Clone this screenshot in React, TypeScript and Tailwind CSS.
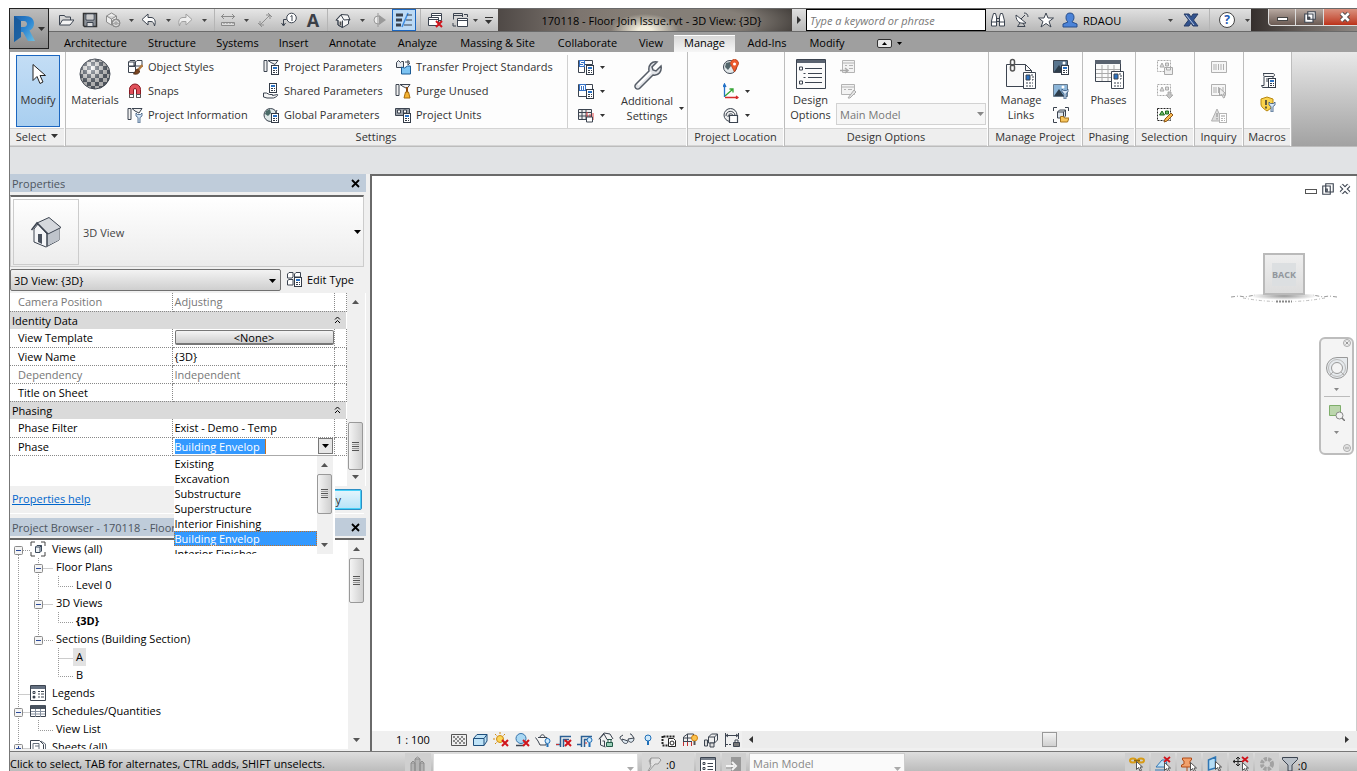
import type { ReactNode } from "react";

type IconProps = { children: ReactNode; size?: number; box?: string; className?: string };

function Icon({ children, size = 16, box = "0 0 16 16", className = "" }: IconProps) {
  return (
    <svg
      width={size}
      height={size}
      viewBox={box}
      fill="none"
      stroke="#3c4450"
      className={`shrink-0 ${className}`}
      aria-hidden="true"
    >
      {children}
    </svg>
  );
}

function Caret({ className = "text-[#444]" }: { className?: string }) {
  return (
    <svg width="5" height="3" viewBox="0 0 5 3" className={`shrink-0 ${className}`} aria-hidden="true">
      <path d="M0 0h5L2.5 3z" fill="currentColor" />
    </svg>
  );
}

function BigCaret({ up = false, className = "text-[#333]" }: { up?: boolean; className?: string }) {
  return (
    <svg width="7" height="4" viewBox="0 0 7 4" className={`shrink-0 ${className}`} aria-hidden="true">
      <path d={up ? "M0 4h7L3.5 0z" : "M0 0h7L3.5 4z"} fill="currentColor" />
    </svg>
  );
}

/* small "sheet with values" badge shared by many ribbon icons */
function Sheet({ x = 8, y = 6, grey = false }: { x?: number; y?: number; grey?: boolean }) {
  const line = grey ? "#b5b5b5" : "#333b47";
  return (
    <g transform={`translate(${x} ${y})`}>
      <rect x=".5" y=".5" width="7" height="9" fill="#fff" stroke={line} />
      <path d="M2 2h4v2H2z" fill={grey ? "#ccc" : "#2a72c4"} stroke="none" />
      <path d="M2 5.500h4M2 7.500h4" stroke={line} strokeDasharray="2 1" />
    </g>
  );
}

function RedX({ x = 9, y = 9 }: { x?: number; y?: number }) {
  return <path d={`M${x} ${y}l6 6m0-6l-6 6`} stroke="#d0141c" strokeWidth="2" />;
}

function Pointer({ x = 8, y = 5 }: { x?: number; y?: number }) {
  return (
    <path
      transform={`translate(${x} ${y})`}
      d="M.5.5v8l2-2 1.500 3.500 1.500-.7L4 6h2.500z"
      fill="#fff"
      stroke="#444"
      strokeWidth=".9"
    />
  );
}

function MiniWrench() {
  return <path d="M9 6v3l2 1.500V16h2v-5.500L15 9V6l-1.500 1.500h-3z" fill="#d8e8f8" stroke="#35557c" strokeWidth=".8" />;
}

const icons = {
  open: <><path d="M1.500 13V3.500h5l1 1.500h5v3" /><path d="M1.500 13l3-5H16l-4 5z" fill="#f4f4f4" /></>,
  save: <><path d="M1.500 1.500h13v13h-12l-1-1z" fill="#8a8f96" stroke="#333" strokeWidth="1.500" /><path d="M4 2h8v6H4z" fill="#fff" /><path d="M5 4h6M5 6h6" stroke="#999" /><path d="M5 10.500h6v4H5z" fill="#ddd" /></>,
  sync: <><path d="M1.500 4l5-3 5 3v6l-5 3-5-3zM1.500 4l5 3 5-3M6.500 7v6" stroke="#8b8b8b" fill="#ededed" /><circle cx="11" cy="11" r="4" fill="#aaa" stroke="#888" /><path d="M8.500 11c1-3 4-3 5 0M8.500 12c1 2 4 2 5 0" stroke="#eee" /></>,
  undo: <path d="M1 7.500L7 2v3.500h3c3 0 5.500 3 3.500 8.500C13 11 12 9.500 10 9.500H7V13z" fill="#fafafa" />,
  redo: <path d="M15 7.500L9 2v3.500H6C3 5.500.5 8.500 2.500 14 3 11 4 9.500 6 9.500h3V13z" fill="#eee" stroke="#a0a0a0" />,
  measure: <><path d="M1 4.500h14M4 2L1.500 4.500 4 7M12 2l2.500 2.500L12 7" stroke="#8a8a8a" /><path d="M1.500 10.500h13v3h-13z" fill="#ddd" stroke="#8a8a8a" /><path d="M4 10v2m3-2v2m3-2v2m3-2v2" stroke="#8a8a8a" /></>,
  dim: <path d="M3 13L13 3M3 9v4h4M9 3h4v4M1 11l4 4M11 1l4 4" stroke="#8f8f8f" />,
  tag: <><circle cx="10.500" cy="6" r="4.800" fill="#fff" /><path d="M9.500 4.500L11 3.500V9M5.500 7.500H2.500V13M.5 11L2.500 14l2-3" /></>,
  house: <><path d="M1 8l5-5.500L13 3l2 5-1.500.5V12l-6 3.500L3 13V8.500z" fill="#f6f6f6" /><path d="M1 8.500L6 3l3 5 6-.500M3 8v5l4.500 2.500V8.500" /><path d="M4.500 9.500h2V14l-2-1z" fill="#555" stroke="none" /></>,
  section: <><circle cx="7" cy="8" r="4" fill="#eee" stroke="#999" /><path d="M7 1v14" stroke="#999" /><path d="M8 3l7 5-7 5z" fill="#9a9a9a" stroke="none" /></>,
  thin: <><path d="M0 3h7M0 8h6M0 13h5" stroke="#38404c" strokeWidth="3" /><path d="M6 15L12 1" stroke="#3c8be0" strokeWidth="1.500" /><path d="M11 3h5M10 8h6M8 13h8" stroke="#38404c" /></>,
  closeHidden: <><path d="M4.500 1.500h10v7h-10zM4.500 3.500h10" fill="#fff" /><path d="M1.500 5.500h10v8h-10zM1.500 7.500h10" fill="#fff" /><RedX /></>,
  switchWin: <><path d="M5.500 6.500h10v8h-10zM5.500 8.500h10" fill="#fff" /><path d="M1.500 7.500v-6h9V5M1.500 3.500h9M12 2.500h3.500V5M1 11v3h3" /></>,
  binoculars: <><path d="M2.500 5l1-3.500h2l1 3.500v9h-5V9zM13.500 5l-1-3.500h-2L9.500 5v9h5V9z" fill="#fff" /><path d="M6.500 6.500h3v3h-3zM1.500 10h5M9.500 10h5" /></>,
  dish: <><path d="M2 3c0 7 4 9 10 8z" fill="#fff" /><path d="M7 7l4-4M10 1c2.500 0 4 1.500 4 4M6 11l-2.500 3.500H11L9 11" /></>,
  star: <path d="M8 1l2 5h5.500l-4.500 3.500L13 15l-5-3.500L3 15l2-5.500L.5 6H6z" fill="#fff" />,
  user: <path d="M8 1c3 0 4 2 4 4.500S10.500 9 10 10l5 2v3H1v-3l5-2C5 9 4 8 4 5.500S5 1 8 1z" fill="#4b83d8" stroke="#284f8c" />,
  exchange: <><path d="M1 2h5l2 3 2-3h5l-4.500 6 4.500 6h-5l-2-3-2 3H1l4.500-6z" fill="#32538f" stroke="#283d66" /><path d="M3 3l8 10" stroke="#b8c8e4" /></>,
  objectStyles: <><path d="M1.500 3L3 1.500h5V6l-1 1H1.500zM8.500 3L10 1.500h5V7H8.500zM1.500 7.500h7v6h-7z" fill="#fff" /><path d="M1.500 3H7v4" /><path d="M15.500 6L11 11" stroke="#b07840" strokeWidth="2.500" /><path d="M10.500 10c-2 0-2 3-4 5 3 .5 6 0 6-3z" fill="#7a4521" stroke="#55321b" /></>,
  magnet: <><path d="M2.500 14.500V6.500a5.500 5.500 0 0111 0v8h-4V7a1.500 1.500 0 00-3 0v7.500z" fill="#e0505a" stroke="#8a1820" /><path d="M2.500 11.500h4v3h-4zM9.500 11.500h4v3h-4z" fill="#fff" stroke="#555" /></>,
  projInfo: <><path d="M1 1.500h3v11H1zM5 1.500h10l-3 4.500-4-2z" fill="#f0f0f0" /><MiniWrench /></>,
  projParams: <><path d="M1 1.500h3v11H1zM5 1.500h10l-3 4-4-2z" fill="#f0f0f0" /><Sheet /></>,
  shared: <><Sheet x={6} y={0} /><path d="M.5 10h3l3 1.500h3v1l5-1c1 1-2 3-4 3.500H4l-3.500-1z" fill="#f5f5f5" /></>,
  global: <><circle cx="7.500" cy="8" r="6.500" fill="#dfe8e8" /><path d="M3 4l4-2 1 4-3 3-3-2z" fill="#4a6b68" stroke="none" /><path d="M8 11l3-2 3-6" /><Sheet /></>,
  transfer: <><path d="M1.500 8.500v-5l2-2 2 2 1-1h2v6z" fill="#e5e9ee" /><path d="M10 3h5M13 1v5l2-2" /><path d="M6.500 15V8l3 1 3-2h3v8z" fill="#7cc3f2" stroke="#1d5b94" /></>,
  purge: <><path d="M1 1.500h3v11H1zM5 1.500h10l-3 4-4-2z" fill="#f0f0f0" /><path d="M12 4v5" stroke="#8a4b13" strokeWidth="2" /><path d="M9 15l1.500-6h3L15 15z" fill="#f5b332" stroke="#a66a0c" /></>,
  units: <><path d="M.5 1.500h14v7H.5z" fill="#9aa0a8" /><path d="M2.500 3h3v3h-3zM8.500 3h3v3h-3z" fill="#fff" /><Sheet /></>,
  struct: <><path d="M.5 1.500h14v4H.5zM.5 5.500h6v8h-6z" fill="#fff" /><path d="M1 1h6v7H1z" fill="#3672c5" stroke="none" /><path d="M6 2.500H2.500v2h3v2H2" stroke="#fff" /><Sheet /></>,
  mep: <><path d="M.5 1.500h14v12H.5z" fill="#fff" /><path d="M1 1h7v7H1z" fill="#3672c5" stroke="none" /><path d="M2.500 7V2.500h4V7M4.500 2v5" stroke="#fff" /><Sheet /></>,
  panelSched: <><path d="M.5 2.500h13v10H.5zM.5 5.500h13M.5 9h13M4 2v11M8 2v11" fill="#eee" /><path d="M9 13V5m3 8V7m3 6V6" stroke="#e04040" /><path d="M8.500 10h6v5h-6z" fill="#fff" /></>,
  location: <><circle cx="7" cy="8" r="6.500" fill="#e3e8ea" /><path d="M3 4l4-1 1 4-3 4-3-3z" fill="#53666b" stroke="none" /><path d="M11.500 13L8.500 7a4 4 0 116 0z" fill="#ee5b2c" stroke="#a9320b" strokeWidth=".7" /><circle cx="11.500" cy="5" r="1.500" fill="#fff" stroke="none" /></>,
  coords: <><path d="M1.500 14V1M0 4l1.500-3L3 4" stroke="#2472c8" strokeWidth="1.300" /><path d="M2 14.500h13M13 13l2 1.500-2 1.500" stroke="#d52b2b" strokeWidth="1.300" /><path d="M2 13l8-7M6.500 6H10v3.500" stroke="#35a535" strokeWidth="1.300" /></>,
  position: <><circle cx="7.500" cy="8" r="6.500" fill="#eee" /><path d="M3 9c0-6 8-6 9-1M5 10c0-4 5-4 5-1" /><path d="M6.500 8.500h8v7h-8z" fill="#fff" strokeWidth="1.200" /></>,
  addOption: <><path d="M2.500 1.500h12v12h-12zM2.500 4h12M5 6.500h2M9 6.500h4M9 9.500h4" stroke="#b4b4b4" fill="#f3f3f3" /><path d="M0 11.500h7M5 9l3 2.500L5 14" stroke="#aaa" strokeWidth="1.500" /></>,
  pickOption: <><path d="M1.500 1.500h13v10h-13zM1.500 4h13M4 6.500h2M8 6.500h4" stroke="#b4b4b4" fill="#f3f3f3" /><path d="M8 15l6-8 2 2-6 6z" fill="#e4e4e4" stroke="#aaa" /></>,
  decal: <><path d="M.5 1.500h14v12H.5z" fill="#59758e" /><path d="M1 13l5-7 5 7z" fill="#2d3d4b" stroke="none" /><circle cx="11" cy="4" r="1.500" fill="#fff" stroke="none" /><Sheet /></>,
  image: <><path d="M.5 1.500h14v12H.5z" fill="#8cb5d8" stroke="#66788a" /><path d="M1 13l5-7 5 7z" fill="#2d3d4b" stroke="none" /><circle cx="10" cy="4" r="1.500" fill="#fff" stroke="none" /><MiniWrench /></>,
  startView: <><path d="M.5 4V.5H4M12 .5h3.500V4M.5 12v3.500H4" /><path d="M4.500 5l2-2h6v6l-2 2h-6zM4.500 5h6v6M10.500 5l2-2" fill="#dfe6ec" /><path d="M7.500 15V9.500h3l1 1.500H16l-1.500 4z" fill="#f7c55d" stroke="#a4701a" /></>,
  selSave: <><path d="M.5 1.500h13v11H.5z" stroke="#a8a8a8" strokeDasharray="2 1" /><path d="M3 8l2-4 2 4zM8.500 4h3v3h-3z" stroke="#aaa" fill="#ddd" /><path d="M7.500 8.500h8v7h-8z" fill="#eee" stroke="#aaa" /><path d="M9.500 9v2h4V9" stroke="#aaa" /></>,
  selLoad: <><path d="M.5 1.500h13v11H.5z" stroke="#a8a8a8" strokeDasharray="2 1" /><path d="M3 8l2-4 2 4zM8.500 4h3v3h-3z" stroke="#aaa" fill="#ddd" /><path d="M11 9h3v3h2l-3.500 3.500L9 12h2z" fill="#c4c4c4" stroke="#aaa" /></>,
  selEdit: <><path d="M.5 1.500h13v12H.5z" stroke="#222" strokeDasharray="2 1" /><path d="M2.500 8l2.500-4 2.500 4zM8.500 4h3v3h-3z" stroke="#1c6a1c" fill="#69b869" /><path d="M7 15l1-3 6-6 2 2-6 6z" fill="#f7b850" stroke="#8a5518" /></>,
  ids: <path d="M.5 2.500h15v11H.5zM3 5v6m2-6v6m2.500-6v6M10 5v6m2.500-6v6" stroke="#b0b0b0" fill="#f6f6f6" />,
  selId: <><path d="M.5 1.500h14v11H.5zM3 4v6m2-6v6m2.500-6v6M12 4v6" stroke="#b0b0b0" fill="#f6f6f6" /><path d="M8.500 5v8l2-2 2 4 1.500-1-2-3h3z" fill="#eee" stroke="#a8a8a8" /></>,
  warn: <><path d="M6 2l5.500 12H.5z" fill="#ddd" stroke="#b0b0b0" /><path d="M6 6v4M6 11v1.500" stroke="#888" /><Sheet grey /></>,
  macroMgr: <><path d="M3 1.500h10c2 0 2 3 0 3H5c-2 0-2-3 0-3M4 4.500v9H1.500l1 2H8M13 4v3M6 7h4M6 9h2" fill="#f6f6f6" /><Sheet /></>,
  macroSec: <><path d="M7 1l6 2v5c0 3-3 5-6 7-3-2-6-4-6-7V3z" fill="#f9d24d" stroke="#b8860b" /><path d="M6 4v5M6 10.500v2" stroke="#333" strokeWidth="1.500" /><MiniWrench /></>,
  types: <><path d="M1.500 3L3 1.500h4V6L6 7H1.500zM8.500 3L10 1.500h4.500V6h-6zM1.500 9.500L3 8.500h4V14H1.500z" fill="#fff" /><Sheet /></>,
  views: <><path d="M1 5V1h4M11 1h4v4M1 11v4h4M15 11v4h-4" stroke="#444" /><path d="M5.500 6L7 4.500h4.500V10L10 11.500H5.500zM5.500 6H10v5M10 6l1.500-1.500" stroke="#3b4a5c" fill="#eef2f6" /></>,
  legend: <><path d="M.5.5h15v15H.5z" fill="#fff" /><path d="M1 1h14v3H1z" fill="#647080" stroke="none" /><path d="M3 6.500h2v2H3zM8 6.500h2M11 6.500h3M8 9h2m1 0h3M8 12h2m1 0h3" /><circle cx="4" cy="12" r="1.500" fill="#3c4450" stroke="none" /></>,
  schedule: <><path d="M.5 2.500h15v11H.5z" fill="#fff" /><path d="M1 2h14v4H1z" fill="#48525f" stroke="none" /><path d="M1 8.500h14M1 11h14M5.500 6v8M10.500 6v8" stroke="#8791a0" /></>,
  sheets: <><path d="M.5 1.500h9l4 4v10H.5z" fill="#fff" /><path d="M3 4.500h6v9H3zM5 7h4M11 2l4.500 3v10" stroke="#66707c" /></>,
  detail: <><path d="M.5 2.500h15v11H.5z" fill="#eee" stroke="#555" /><path d="M2 4h2v2H2zm4 0h2v2H6zm4 0h2v2h-2zM4 6h2v2H4zm4 0h2v2H8zm4 0h2v2h-2zM2 8h2v2H2zm4 0h2v2H6zm4 0h2v2h-2zM4 10h2v2H4zm4 0h2v2H8zm4 0h2v2h-2z" fill="#888" stroke="none" /></>,
  cube: <><path d="M1.500 6.500L5 2.500h10V9l-3 4.500H1.500z" fill="#bfe3f7" stroke="#1f4f7c" /><path d="M1.500 6.500H12v7M12 6.500l3-4" stroke="#1f4f7c" /></>,
  sun: <><circle cx="7" cy="7" r="3.500" fill="#fbd75a" stroke="#d08a10" /><path d="M7 0v2M0 7h2M2 2l1.500 1.500M12 2l-1.500 1.500M2 12l1.500-1.500" stroke="#d08a10" /><RedX y={8} /></>,
  shadow: <><circle cx="7" cy="6.500" r="5" fill="#a9d8f4" stroke="#3774ac" /><path d="M2 13.500h7" strokeWidth="1.500" /><RedX y={8} /></>,
  teapot: <><path d="M3 5.500h9l-1 7.500H5L3 9 .5 5.500M5 5c1-3 4-3 5 0" fill="#f6f6f6" /><circle cx="12.500" cy="9" r="2.500" fill="#cfe9fb" stroke="#1f6fb8" /><path d="M12.500 12v3" stroke="#1f6fb8" strokeWidth="2" /></>,
  crop: <><path d="M0 12.500h4M4.500 15V4.500H15M7.500 15V7.500H13" stroke="#2b5f94" strokeWidth="1.500" /><path d="M0 12.500h3M8 9h3" stroke="#d03030" /><RedX y={8} /></>,
  cropShow: <><path d="M0 12.500h4M4.500 15V4.500H15M7.500 15V7.500H11" stroke="#2b5f94" strokeWidth="1.500" /><path d="M8 11h2" stroke="#d03030" /><circle cx="12.500" cy="8" r="2.500" fill="#cfe9fb" stroke="#1f6fb8" /><path d="M12.500 11v4" stroke="#1f6fb8" strokeWidth="2" /></>,
  lockView: <><path d="M1 7l5-6 6 1 3 5M2.500 7v6l5 2M4.500 9h2v5M1 7.500L6 2l3 5.500h5" fill="#f3f3f3" /><path d="M8.500 10.500h6v4h-6z" fill="#9bd0b8" stroke="#235a48" /><path d="M10 10V7.500h3V10" stroke="#235a48" /></>,
  glasses: <path d="M1 5l3-2M1 5c0 2 1 3 2 3M3 7c0 5 6 6 6 2zM9 7c1 5 6 4 6-1zM15 6l-3-4h-1" fill="#dfeaf2" />,
  bulb: <><circle cx="8" cy="6" r="3" fill="#cfe9fb" stroke="#1f6fb8" /><path d="M8 9v4" stroke="#1f6fb8" strokeWidth="2" /></>,
  tempProps: <><path d="M2.500 4.500h12M1.500 13.500h5M1.500 4v9" strokeWidth="2" strokeDasharray="2 1" stroke="#222" /><path d="M7.500 6.500h5l2 2v6h-7z" fill="#fff" stroke="#222" /><circle cx="11" cy="11" r="2" stroke="#222" /></>,
  analytical: <><path d="M1.500 14V5l4-3h6v5M2 6h9M5.500 2v12M2 9.500h8M9.500 9v5" /><path d="M1.500 14v-4M5.500 14v-4M9.500 14v-4" stroke="#c43030" /><circle cx="12.500" cy="6" r="3" fill="#fbc24d" stroke="#d08010" /><path d="M12.500 9v4" stroke="#555" strokeWidth="2" /></>,
  displace: <><path d="M5.500 5l3-3h6v6l-3 3h-6zM5.500 5h6v6M11.500 5l3-3" fill="#eee" /><path d="M1.500 8h3v6h-3zM7 11h4v4H7z" fill="#ddd" /></>,
  constraints: <><path d="M1.500 1v14M14.500 1v6M2 3.500h12M4 2L2 3.500 4 5M12 2l2 1.500L12 5" /><path d="M2 12.500h6" strokeDasharray="2 1" /><path d="M9.500 10.500h6v4h-6z" fill="#777" /><path d="M11 10V8h3v2" /></>,
  worksets: <><path d="M1 16V7h4v9M5 16V3h5v13M10 16V7h4v9" fill="#b4b4b4" stroke="#8d8d8d" /><path d="M1 7l2-2 2 2M5 3l2.500-2L10 3M10 7l2-2 2 2" stroke="#8d8d8d" /></>,
  request: <path d="M5 2h8l2 2-3 4H9l-6 7H2l3-5-1-2zM5 2L3 5l2 3" fill="#e2e2e2" stroke="#999" />,
  optList: <><path d="M.5 1.500h15v16H.5z" fill="#fff" /><path d="M1 2h14v2H1z" fill="#777f8a" stroke="none" /><path d="M3 6.500h2v2H3zM7.500 7.500H13M7.500 10.500H13M3 11.500h2v2H3zM7.500 13.500H13" /></>,
  optMove: <><path d="M5 1h10v15H5z" fill="#999" stroke="none" /><path d="M0 10h8M6 6l4 4-4 4" stroke="#f4f4f4" strokeWidth="2" /><path d="M0 12h5" stroke="#999" /></>,
  link: <><ellipse cx="4" cy="4.500" rx="3" ry="2" stroke="#d79b15" strokeWidth="2" /><ellipse cx="12" cy="4.500" rx="3" ry="2" stroke="#d79b15" strokeWidth="2" /><path d="M5 4.500h6" stroke="#8f6608" strokeWidth="1.500" /><Pointer x={7} y={5} /></>,
  underlay: <><path d="M1 11l6-7h4l1 7zM0 14h10" fill="#c2e2f6" stroke="#3478b4" /><path d="M9 1l6 5m0-5L9 6" stroke="#d0141c" strokeWidth="1.800" /><Pointer x={9} y={6} /></>,
  pinned: <><path d="M1.500 2h9v2L9 5v3l3 1v2H.5V9L3 8V5L1.500 4zM6 11v4" fill="#f1a06a" stroke="#b04a16" /><Pointer x={9} y={6} /></>,
  face: <><path d="M1.500 4l7-3v11l-7 2z" fill="#b5ddf5" stroke="#2f76b4" strokeWidth="1.500" /><Pointer x={8} y={5} /></>,
  drag: <><path d="M5 1v9M0 5.500h10M3 3l2-2 2 2M3 8l2 2 2-2M2 4L0 5.500 2 7" stroke="#222" /><path d="M9 1l6 5m0-5L9 6" stroke="#d0141c" strokeWidth="1.800" /><Pointer x={9} y={6} /></>,
  gear: <circle cx="8" cy="8" r="5" stroke="#a2a2a2" strokeWidth="4" strokeDasharray="3 1" />,
  filter: <path d="M.5 1.500h15v2L10 9v6H6V9L.5 3.500z" fill="#b9c0c8" />,
};

type IconName = keyof typeof icons;

function Glyph({ name, size }: { name: IconName; size?: number }) {
  return <Icon size={size}>{icons[name]}</Icon>;
}

function Slot({ w, name, label }: { w: string; name?: IconName; label: string }) {
  return (
    <button type="button" aria-label={label} className={`flex h-full shrink-0 items-center justify-center ${w}`}>
      {name ? <Glyph name={name} /> : <Caret />}
    </button>
  );
}

function Divider() {
  return <span className="h-full w-px shrink-0 bg-[#b5b5b5]" />;
}

function QuickAccess() {
  return (
    <div className="flex h-full w-[450px] shrink-0 items-center bg-linear-to-b from-[#e6e6e6] to-[#bdbdbd] pl-[6px]">
      <Slot w="w-[24px]" name="open" label="Open" />
      <Slot w="w-[24px]" name="save" label="Save" />
      <Slot w="w-[22px]" name="sync" label="Synchronize" />
      <Slot w="w-[14px]" label="Synchronize options" />
      <Slot w="w-[22px]" name="undo" label="Undo" />
      <Slot w="w-[16px]" label="Undo list" />
      <Slot w="w-[18px]" name="redo" label="Redo" />
      <Slot w="w-[20px]" label="Redo list" />
      <Divider />
      <Slot w="w-[26px]" name="measure" label="Measure" />
      <Slot w="w-[10px]" label="Measure options" />
      <Slot w="w-[28px]" name="dim" label="Aligned dimension" />
      <Slot w="w-[20px]" name="tag" label="Tag by category" />
      <button type="button" className="w-[28px] text-center text-lg font-bold text-[#3a3f47]">A</button>
      <Divider />
      <Slot w="w-[30px]" name="house" label="Default 3D view" />
      <Slot w="w-[8px]" label="3D view options" />
      <Slot w="w-[26px]" name="section" label="Section" />
      <button
        type="button"
        aria-label="Thin lines"
        className="flex h-[22px] w-[24px] items-center justify-center border border-[#1b66c0] bg-[#bcdaf5]"
      >
        <Glyph name="thin" />
      </button>
      <span className="w-[4px]" />
      <Divider />
      <Slot w="w-[28px]" name="closeHidden" label="Close hidden windows" />
      <Slot w="w-[22px]" name="switchWin" label="Switch windows" />
      <Slot w="w-[8px]" label="Window list" />
      <button type="button" aria-label="Customize" className="flex flex-1 flex-col items-center gap-[2px] text-[#333]">
        <span className="h-px w-[8px] bg-[#333]" />
        <BigCaret />
      </button>
    </div>
  );
}

function TitleBar() {
  return (
    <header className="flex h-[24px] border-y border-[#6a6a6a] bg-linear-to-b from-[#e0e0e0] to-[#b8b8b8]">
      <div className="w-[38px] shrink-0" />
      <QuickAccess />
      <div className="flex min-w-0 flex-1 items-center justify-center bg-[radial-gradient(ellipse_34px_16px_at_50%_95%,#f2eddc_20%,transparent),radial-gradient(ellipse_120px_34px_at_70%_55%,#857f78_35%,transparent),linear-gradient(90deg,#4f4946,#7d756f_28%,#8b8379_55%,#2a2624_90%)] whitespace-nowrap">
        <h1 className="pl-[13px] text-[11px] text-black">170118 - Floor Join Issue.rvt - 3D View: {"{3D}"}</h1>
      </div>
      <div className="flex w-[459px] shrink-0 items-center">
        <span className="flex w-[14px] justify-center">
          <svg width="4" height="8" viewBox="0 0 4 8" aria-hidden="true"><path d="M0 0l4 4-4 4z" fill="#333" /></svg>
        </span>
        <input
          aria-label="Search"
          placeholder="Type a keyword or phrase"
          className="h-[22px] w-[180px] border border-black bg-white px-[3px] text-[11px] italic outline-none placeholder:text-[#777]"
        />
        <Slot w="w-[24px]" name="binoculars" label="Find" />
        <Slot w="w-[24px]" name="dish" label="Communication center" />
        <Slot w="w-[23px]" name="star" label="Favorites" />
        <button type="button" className="flex h-full w-[103px] items-center gap-[5px] pl-[5px] text-[11px]">
          <Glyph name="user" />
          RDAOU
        </button>
        <Slot w="w-[20px]" label="Account options" />
        <Slot w="w-[22px]" name="exchange" label="Exchange apps" />
        <span className="w-[7px]" />
        <Divider />
        <button type="button" aria-label="Help" className="flex w-[34px] justify-center">
          <span className="flex size-4 items-center justify-center rounded-full border border-[#444] bg-white text-xs font-bold text-[#2359b4]">?</span>
        </button>
        <Slot w="w-[7px]" label="Help options" />
      </div>
      <div className="flex w-[106px] shrink-0 items-start justify-end bg-linear-to-r from-[#352f2d] via-[#665f5b] to-[#8d8782]">
        <button type="button" aria-label="Minimize" className="flex h-[17px] w-[28px] items-center justify-center rounded-bl border border-t-0 border-[#ddd] bg-linear-to-b from-[#b9aaa2] to-[#6a5a53]">
          <span className="mt-[4px] h-[4px] w-[11px] border border-[#444] bg-white" />
        </button>
        <button type="button" aria-label="Restore" className="flex h-[17px] w-[28px] items-center justify-center border-r border-b border-[#ddd] bg-linear-to-b from-[#b9aaa2] to-[#6a5a53]">
          <Icon size={12}><path d="M5 1h10v10H5zM1 4h11v11H1z" fill="#fff" strokeWidth="1.500" /><path d="M5 8h3v3H5z" fill="#555" /></Icon>
        </button>
        <button type="button" aria-label="Close" className="flex h-[17px] w-[33px] items-center justify-center border-b border-[#ddd] bg-linear-to-b from-[#d9917f] to-[#bb3017] pl-[9px]">
          <Icon size={12}><path d="M3 3l10 10M13 3L3 13" stroke="#444" strokeWidth="6" /><path d="M3 3l10 10M13 3L3 13" stroke="#fff" strokeWidth="3.500" /></Icon>
        </button>
      </div>
    </header>
  );
}

const tabs = [
  { label: "Architecture", w: "w-[85px]" },
  { label: "Structure", w: "w-[68px]" },
  { label: "Systems", w: "w-[63px]" },
  { label: "Insert", w: "w-[49px]" },
  { label: "Annotate", w: "w-[69px]" },
  { label: "Analyze", w: "w-[61px]" },
  { label: "Massing & Site", w: "w-[99px]" },
  { label: "Collaborate", w: "w-[81px]" },
  { label: "View", w: "w-[46px]" },
  { label: "Manage", w: "w-[61px]" },
  { label: "Add-Ins", w: "w-[64px]" },
  { label: "Modify", w: "w-[56px]" },
];

function TabRow() {
  return (
    <nav className="flex h-[20px] items-end bg-[#9f9f9f] pl-[43px]">
      {tabs.map((tab) => (
        <button
          key={tab.label}
          type="button"
          className={`h-[17px] shrink-0 border-t pb-[2px] leading-[14px] whitespace-nowrap text-center ${tab.w} ${
            tab.label === "Manage" ? "border-white bg-linear-to-b from-[#d8d8d8] to-[#f6f6f6]" : "border-transparent"
          }`}
        >
          {tab.label}
        </button>
      ))}
      <button type="button" aria-label="Minimize ribbon" className="ml-[22px] flex h-[18px] items-center gap-[5px]">
        <span className="flex h-[9px] w-[15px] items-center justify-center rounded-xs border border-[#333] bg-[#e8e8e8]"><Caret className="rotate-180" /></span>
        <Caret className="text-black" />
      </button>
    </nav>
  );
}

function Panel({ title, w, children }: { title: ReactNode; w: string; children: ReactNode }) {
  return (
    <section className={`flex shrink-0 flex-col border-r border-[#bdbdbd] bg-[#fdfdfd] ${w}`}>
      <div className="flex h-[76px] pt-[3px]">{children}</div>
      <h2 className="mr-px flex h-[18px] items-center justify-center border-y border-[#d4d4d4] bg-[#eeeeee] pb-[2px] whitespace-nowrap">
        {title}
      </h2>
    </section>
  );
}

function Small({ name, label, text, caret = false }: { name: IconName; label: string; text?: boolean; caret?: boolean }) {
  return (
    <button type="button" aria-label={label} className="flex h-6 items-center gap-[5px] whitespace-nowrap">
      <Glyph name={name} />
      {text && <span className="pb-[2px]">{label}</span>}
      {caret && <Caret className="ml-px text-[#333]" />}
    </button>
  );
}

function Large({ label, w, children, active = false }: { label: ReactNode; w: string; children: ReactNode; active?: boolean }) {
  return (
    <button
      type="button"
      className={`flex h-[72px] shrink-0 flex-col items-center border leading-[15px] ${w} ${
        active ? "border-[#1b66c0] bg-linear-to-b from-[#c3ddf5] to-[#a9cff0]" : "border-transparent"
      }`}
    >
      <span className="flex h-[36px] items-center justify-center">{children}</span>
      <span>{label}</span>
    </button>
  );
}

function Ribbon() {
  return (
    <div className="flex h-[95px] border-b border-[#bcbcbc] bg-linear-to-b from-[#e9e9e9] to-[#a2a2a2] text-[#333]">
      <Panel w="w-[56px]" title={<span className="flex items-center gap-[5px]">Select <BigCaret /></span>}>
        <div className="pl-[6px]">
          <Large label="Modify" w="w-[44px]" active>
            <Icon size={22} box="0 0 22 22"><path d="M6 1.500v16l4-4 3 7 3-1.500-3-6.500h5.500z" fill="#fff" stroke="#222" /></Icon>
          </Large>
        </div>
      </Panel>

      <Panel w="w-[622px]" title="Settings">
        <div className="w-[61px] pl-[2px]">
          <Large label="Materials" w="w-[54px]">
            <Icon size={32} box="0 0 32 32">
              <defs>
                <pattern id="checks" width="8" height="8" patternUnits="userSpaceOnUse">
                  <path d="M0 0h8v8H0z" fill="#fff" stroke="none" />
                  <path d="M0 0h4v4H0zM4 4h4v4H4z" fill="#606a78" stroke="none" />
                </pattern>
                <radialGradient id="ball" cx=".38" cy=".3">
                  <stop offset="0" stopColor="#fff" stopOpacity=".5" />
                  <stop offset="1" stopColor="#333" stopOpacity=".4" />
                </radialGradient>
              </defs>
              <circle cx="16" cy="16" r="15" fill="url(#checks)" stroke="#444c58" />
              <circle cx="16" cy="16" r="15" fill="url(#ball)" stroke="none" />
            </Icon>
          </Large>
        </div>
        <div className="w-[136px]">
          <Small name="objectStyles" label="Object Styles" text />
          <Small name="magnet" label="Snaps" text />
          <Small name="projInfo" label="Project Information" text />
        </div>
        <div className="w-[132px]">
          <Small name="projParams" label="Project Parameters" text />
          <Small name="shared" label="Shared Parameters" text />
          <Small name="global" label="Global Parameters" text />
        </div>
        <div className="w-[172px]">
          <Small name="transfer" label="Transfer Project Standards" text />
          <Small name="purge" label="Purge Unused" text />
          <Small name="units" label="Project Units" text />
        </div>
        <div className="border-l border-[#d0d0d0] pl-[10px]">
          <Small name="struct" label="Structural settings" caret />
          <Small name="mep" label="MEP settings" caret />
          <Small name="panelSched" label="Panel schedule templates" caret />
        </div>
        <div className="flex flex-1 items-center justify-end pr-[3px]">
          <Large label={<>Additional<br />Settings</>} w="w-[64px]">
            <Icon size={30} box="0 0 30 30"><path d="M25 2l-5 5 1 3 3 1 5-5c1 5-2 10-8 9L8 28c-3 3-7-1-4-4L17 11c-1-6 3-10 8-9z" fill="#e2e4e8" stroke="#555c66" strokeWidth="1.500" /><path d="M6 25L19 12" stroke="#fff" strokeWidth="2" /></Icon>
          </Large>
          <Caret className="mt-[34px] text-[#333]" />
        </div>
      </Panel>

      <Panel w="w-[97px]" title="Project Location">
        <div className="pl-[35px]">
          <Small name="location" label="Location" />
          <Small name="coords" label="Coordinates" caret />
          <Small name="position" label="Position" caret />
        </div>
      </Panel>

      <Panel w="w-[204px]" title="Design Options">
        <Large label={<>Design<br />Options</>} w="w-[51px]">
          <Icon size={32} box="0 0 32 32">
            <path d="M1.500 1.500h29v29h-29z" fill="#fbfbfb" />
            <path d="M2 2h28v3H2z" fill="#59626f" stroke="none" />
            <path d="M4.500 9h3v3h-3zM10 10.500h17M8.500 15.500h2M13 15.500h14M8.500 19.500h2M13 19.500h14M4.500 23h3v3h-3zM10 24.500h17" />
          </Icon>
        </Large>
        <div className="flex flex-1 flex-col items-start pr-[2px]">
          <div className="pl-[4px]">
            <Small name="addOption" label="Add to set" />
            <Small name="pickOption" label="Pick to edit" />
          </div>
          <div className="relative w-full">
            <select aria-label="Active design option" className="h-[22px] w-full appearance-none border border-[#d2d2d2] bg-[#f6f6f6] pl-[3px] text-[11px] text-[#777]">
              <option>Main Model</option>
            </select>
            <BigCaret className="absolute top-[9px] right-[2px] text-[#888]" />
          </div>
        </div>
      </Panel>

      <Panel w="w-[94px]" title="Manage Project">
        <Large label={<>Manage<br />Links</>} w="w-[64px]">
          <Icon size={32} box="0 0 32 32">
            <path d="M1.500 6.500h19l6 6v16h-25z" fill="#fafafa" />
            <path d="M20.500 6.500v6h6" />
            <rect x="5.500" y="1.500" width="4" height="6" rx="2" stroke="#555" strokeWidth="1.500" />
            <rect x="5.500" y="7" width="4" height="6" rx="2" stroke="#555" strokeWidth="1.500" />
            <path d="M18.500 14.500h12v16h-12z" fill="#fff" />
            <path d="M21 17h4v5h-4z" fill="#2a72c4" /><path d="M26 17h2v5h-2M21 25h7M21 28h7" strokeDasharray="2 1" />
          </Icon>
        </Large>
        <div>
          <Small name="decal" label="Decal types" />
          <Small name="image" label="Manage images" />
          <Small name="startView" label="Starting view" />
        </div>
      </Panel>

      <Panel w="w-[53px]" title="Phasing">
        <Large label="Phases" w="w-[51px]">
          <Icon size={32} box="0 0 32 32">
            <path d="M2.500 2.500h25v21h-25z" fill="#fafafa" />
            <path d="M2 2h26v4H2z" fill="#59626f" stroke="none" />
            <path d="M3 11.500h24M3 15.500h24M3 19.500h24M9 7v16M15 7v16M21 7v16" stroke="#aaa" />
            <path d="M18.500 13.500h12v17h-12z" fill="#fff" />
            <path d="M21 16h4v5h-4z" fill="#2a72c4" /><path d="M26 16h2v5h-2M21 25h7M21 28h7" strokeDasharray="2 1" />
          </Icon>
        </Large>
      </Panel>

      <Panel w="w-[59px]" title="Selection">
        <div className="pl-[21px]">
          <Small name="selSave" label="Save selection" />
          <Small name="selLoad" label="Load selection" />
          <Small name="selEdit" label="Edit selection" />
        </div>
      </Panel>

      <Panel w="w-[49px]" title="Inquiry">
        <div className="pl-[16px]">
          <Small name="ids" label="IDs of selection" />
          <Small name="selId" label="Select by ID" />
          <Small name="warn" label="Warnings" />
        </div>
      </Panel>

      <Panel w="w-[48px]" title="Macros">
        <div className="flex flex-col justify-center pl-[16px]">
          <Small name="macroMgr" label="Macro manager" />
          <Small name="macroSec" label="Macro security" />
        </div>
      </Panel>
    </div>
  );
}

function Scrollbar({ thumb, className = "" }: { thumb: string; className?: string }) {
  return (
    <div className={`flex shrink-0 flex-col items-center bg-[#f0f0f0] py-[7px] ${className}`}>
      <BigCaret up className="text-[#555]" />
      <div className={`flex w-[15px] flex-col items-center justify-center gap-px rounded-xs border border-[#999] bg-linear-to-r from-[#f4f4f4] to-[#cfcfcf] ${thumb}`}>
        <span className="h-px w-[7px] bg-[#555]" />
        <span className="h-px w-[7px] bg-[#999]" />
        <span className="h-px w-[7px] bg-[#555]" />
        <span className="h-px w-[7px] bg-[#999]" />
        <span className="h-px w-[7px] bg-[#555]" />
      </div>
      <BigCaret className="mt-auto text-[#555]" />
    </div>
  );
}

function PaneHeader({ title }: { title: string }) {
  return (
    <div className="flex h-[18px] items-center justify-between bg-[#bfccda] pr-[6px] pl-[2px] text-[#4d5560]">
      <h2 className="truncate">{title}</h2>
      <button type="button" aria-label={`Close ${title}`}>
        <svg width="9" height="9" viewBox="0 0 9 9" aria-hidden="true"><path d="M1 1l7 7M8 1L1 8" stroke="#000" strokeWidth="1.800" /></svg>
      </button>
    </div>
  );
}

const phases = ["Existing", "Excavation", "Substructure", "Superstructure", "Interior Finishing", "Building Envelop", "Interior Finishes"];

function PhaseList() {
  return (
    <div className="absolute top-[17px] -left-px z-10 flex h-[99px] w-[161px] overflow-hidden border-t border-[#aaa] bg-white">
      <ul role="listbox" aria-label="Phases" className="flex-1">
        {phases.map((phase) => (
          <li
            key={phase}
            role="option"
            aria-selected={phase === "Building Envelop"}
            className={`h-[15px] pl-px leading-[15px] ${
              phase === "Building Envelop" ? "bg-[#3399ff] text-white outline-1 -outline-offset-1 outline-dotted outline-[#c87020]" : ""
            }`}
          >
            {phase}
          </li>
        ))}
      </ul>
      <Scrollbar thumb="mt-[7px] h-[40px]" className="mr-[2px] w-[16px]" />
    </div>
  );
}

type Row = { name: string; value?: string; dim?: boolean; group?: boolean };

const rows: Row[] = [
  { name: "Camera Position", value: "Adjusting", dim: true },
  { name: "Identity Data", group: true },
  { name: "View Template", value: "<None>" },
  { name: "View Name", value: "{3D}" },
  { name: "Dependency", value: "Independent", dim: true },
  { name: "Title on Sheet" },
  { name: "Phasing", group: true },
  { name: "Phase Filter", value: "Exist - Demo - Temp" },
  { name: "Phase", value: "Building Envelop" },
];

function PropertyValue({ row }: { row: Row }) {
  if (row.name === "View Template") {
    return (
      <button type="button" className="block h-[15px] w-[159px] rounded-xs border border-[#777] border-b-2 bg-linear-to-b from-[#f4f4f4] to-[#cfcfcf] leading-[13px]">
        {row.value}
      </button>
    );
  }
  if (row.name === "Phase") {
    return (
      <div className="relative flex h-[17px] items-center justify-between">
        <select id="phase" aria-label="Phase" defaultValue={row.value} className="h-[15px] w-[91px] appearance-none border-r border-[#c87020] bg-[#3399ff] p-0 text-[11px] leading-[15px] text-white">
          {phases.map((phase) => <option key={phase}>{phase}</option>)}
        </select>
        <span className="mr-px flex h-[16px] w-[15px] items-center justify-center border border-[#777] bg-[#e6e6e6]"><BigCaret className="text-black" /></span>
        <PhaseList />
      </div>
    );
  }
  return <>{row.value}</>;
}

function PropertyTable() {
  return (
    <table className="w-[336px] table-fixed border-collapse self-start">
      <colgroup>
        <col className="w-[162px]" />
        <col className="w-[162px]" />
        <col className="w-[12px]" />
      </colgroup>
      <tbody>
        {rows.map((row) =>
          row.group ? (
            <tr key={row.name} className="h-[18px] bg-[#dadada]">
              <th colSpan={3} className="p-0 pr-[5px] pl-[2px] text-left font-normal">
                <span className="flex h-[17px] items-center justify-between">
                  {row.name}
                  <svg width="7" height="8" viewBox="0 0 7 8" fill="none" stroke="#000" aria-hidden="true"><path d="M1 3.500L3.500 1 6 3.500M1 7L3.500 4.500 6 7" /></svg>
                </span>
              </th>
            </tr>
          ) : (
            <tr key={row.name} className={`h-[18px] ${row.dim ? "text-[#777]" : ""}`}>
              <th className="border-r border-b border-dotted border-[#888] p-0 pl-[8px] text-left font-normal leading-[17px]">{row.name}</th>
              <td className="border-r border-b border-dotted border-[#888] p-0 pl-[2px] leading-[17px]"><PropertyValue row={row} /></td>
              <td className="border-r border-b border-dotted border-[#888] p-0" />
            </tr>
          )
        )}
      </tbody>
    </table>
  );
}

function Properties() {
  return (
    <section>
      <PaneHeader title="Properties" />
      <div className="mt-[3px] mr-[2px] flex h-[72px] items-center border border-[#ccc] border-t-2 border-t-[#666] bg-linear-to-b from-white to-[#ececec] pr-[2px] pl-[2px]">
        <div className="flex size-[66px] items-center justify-center border border-[#ccc]">
          <Icon size={32} box="0 0 32 32">
            <path d="M4 13l4-5 9 10 12-6v12l-13 7L4 26z" fill="#f4f5f7" />
            <path d="M17 18l12-6v12l-12 6z" fill="#bfc4cb" stroke="none" />
            <path d="M7 7l12-5.500L31 11.500 18 18z" fill="#d5d8dd" />
            <path d="M1.500 14L7 7l11 11M17 18v12" strokeWidth="1.500" /><path d="M8 18h4v10l-4-2z" fill="#4a525e" stroke="none" />
          </Icon>
        </div>
        <span className="pt-[2px] pl-[4px] text-[#444]">3D View</span>
        <BigCaret className="ml-auto" />
      </div>
      <div className="flex h-[26px] items-center">
        <div className="relative w-[271px]">
          <select aria-label="Element" className="block h-[22px] w-full appearance-none rounded-xs border border-[#707070] bg-linear-to-b from-[#f3f3f3] to-[#cfcfcf] pl-[3px] text-[11px]">
            <option>3D View: {"{3D}"}</option>
          </select>
          <BigCaret className="absolute top-[10px] right-[5px] text-black" />
        </div>
        <button type="button" className="ml-[5px] flex items-center gap-[5px] pb-[2px]"><Glyph name="types" /> Edit Type</button>
      </div>
      <div className="flex h-[193px] bg-white pr-[2px]">
        <PropertyTable />
        <Scrollbar thumb="mt-[118px] h-[48px]" className="w-[18px]" />
      </div>
      <div className="mr-[2px] flex h-[28px] items-center justify-between border-b border-white pr-[2px] pl-[2px]">
        <a href="#help" className="pb-[2px] text-[#0066cc] underline">Properties help</a>
        <button type="button" className="h-[21px] w-[72px] rounded-xs border border-[#2c8ec4] bg-linear-to-b from-[#e6f5fc] to-[#b6e3f8] pr-[20px] text-right text-[#333] shadow-[inset_0_0_0_1px_#48d0f8]">Apply</button>
      </div>
    </section>
  );
}

type Guide = "v" | "none" | "end" | "tee" | "minus" | "minusLast" | "minusFirst" | "plus";
type Node = { label: string; guides: Guide[]; icon?: IconName; bold?: boolean; selected?: boolean };

const tree: Node[] = [
  { label: "Views (all)", guides: ["minusFirst"], icon: "views" },
  { label: "Floor Plans", guides: ["v", "minus"] },
  { label: "Level 0", guides: ["v", "v", "end"] },
  { label: "3D Views", guides: ["v", "minus"] },
  { label: "{3D}", guides: ["v", "v", "end"], bold: true },
  { label: "Sections (Building Section)", guides: ["v", "minusLast"] },
  { label: "A", guides: ["v", "none", "tee"], selected: true },
  { label: "B", guides: ["v", "none", "end"] },
  { label: "Legends", guides: ["tee"], icon: "legend" },
  { label: "Schedules/Quantities", guides: ["minus"], icon: "schedule" },
  { label: "View List", guides: ["v", "end"] },
  { label: "Sheets (all)", guides: ["plus"], icon: "sheets" },
];

const guidePaths: Record<Guide, string> = {
  v: "M8.500 0v18",
  none: "",
  end: "M8.500 0v10.500H23",
  tee: "M8.500 0v18M8.500 10.500H23",
  minus: "M8.500 0v18M8.500 10.500H23",
  minusLast: "M8.500 0v10.500H23",
  minusFirst: "M8.500 18v-7.500H23",
  plus: "M8.500 0v18M8.500 10.500H23",
};

function TreeGuide({ kind, clip }: { kind: Guide; clip: boolean }) {
  const boxed = kind.startsWith("minus") || kind === "plus";
  return (
    <svg width="20" height="18" className={`shrink-0 ${clip ? "overflow-hidden" : "overflow-visible"}`} aria-hidden="true">
      <path d={guidePaths[kind]} fill="none" stroke="#999" strokeDasharray="1 1" />
      {boxed && <rect x="4.500" y="6.500" width="8" height="8" rx="1" fill="#f4f4f4" stroke="#8a8a8a" />}
      {boxed && <path d={kind === "plus" ? "M6 10.500h5M8.500 8v5" : "M6 10.500h5"} stroke="#2a4a9a" />}
    </svg>
  );
}

function ProjectBrowser() {
  return (
    <section className="flex min-h-0 flex-1 flex-col pt-[4px]">
      <PaneHeader title="Project Browser - 170118 - Floor Join Issue.rvt" />
      <div className="mt-[2px] mr-[2px] mb-[2px] flex min-h-0 flex-1 overflow-hidden border-t-2 border-[#666] bg-white">
        <ul className="flex-1">
          {tree.map((node) => (
            <li key={node.label} className="flex h-[18px] items-center leading-[18px]">
              {node.guides.map((kind, i) => <TreeGuide key={i} kind={kind} clip={Boolean(node.icon)} />)}
              {node.icon && <Glyph name={node.icon} />}
              <span className={`ml-[3px] px-[3px] ${node.bold ? "font-bold" : ""} ${node.selected ? "bg-[#e2e2e2]" : ""}`}>
                {node.label}
              </span>
            </li>
          ))}
        </ul>
        <Scrollbar thumb="mt-[7px] h-[45px]" className="w-[16px]" />
      </div>
    </section>
  );
}

function ViewCube() {
  return (
    <div className="absolute top-[77px] right-[17px] flex w-[110px] flex-col items-center">
      <button type="button" className="z-10 flex size-[42px] items-center justify-center border-2 border-[#bababa] bg-linear-to-b from-[#eeeeee] to-[#dddddd]">
        <span className="bg-[#dcdfe1] py-1 text-[9px] font-bold text-[#92979d]">BACK</span>
      </button>
      <svg width="110" height="10" viewBox="0 0 110 10" fill="none" className="-mt-px" aria-hidden="true">
        <defs>
          <radialGradient id="cubeShadow">
            <stop offset="0" stopColor="#999" />
            <stop offset="1" stopColor="#fff" />
          </radialGradient>
        </defs>
        <ellipse cx="55" cy="2" rx="34" ry="4" fill="url(#cubeShadow)" />
        <path d="M2 3l8-1 6 1 10-2M108 3l-8-1-6 1-10-2" stroke="#999" strokeDasharray="4 2 1 2" />
        <path d="M14 4q16 3 32 3.500M96 4q-16 3-32 3.500" stroke="#bbb" strokeDasharray="3 2 1 2" />
        <path d="M47 7.500h16" stroke="#888" strokeWidth="2" strokeDasharray="2 1" />
      </svg>
    </div>
  );
}

function NavigationBar() {
  return (
    <div className="absolute top-[161px] right-[2px] flex h-[118px] w-[35px] flex-col items-center rounded-md border-2 border-[#bdbdbd] bg-[#f4f4f4]">
      <button type="button" aria-label="Close navigation bar" className="mr-px self-end">
        <Icon size={8}><circle cx="8" cy="8" r="7" stroke="#aaa" strokeWidth="2" fill="#eee" /><path d="M5 5l6 6M11 5l-6 6" stroke="#999" strokeWidth="2" /></Icon>
      </button>
      <button type="button" aria-label="Steering wheel" className="mt-[9px]">
        <Icon size={24} box="0 0 24 24">
          <path d="M12 1.500h10.500V12A10.500 10.500 0 1112 1.500z" fill="#e6eaed" stroke="#999" />
          <circle cx="12" cy="12" r="8.500" stroke="#bbb" /><circle cx="12" cy="12" r="5.500" fill="#f4f4f4" stroke="#999" />
          <path d="M8 16l-3 3M16 16l3 3" stroke="#aaa" />
        </Icon>
      </button>
      <Caret className="mt-[8px] text-[#888]" />
      <span className="mt-[5px] h-px w-[26px] bg-[#bbb]" />
      <button type="button" aria-label="Zoom" className="mt-[8px]">
        <Icon><path d="M.5.5h11v10H.5z" fill="#bcd6ad" stroke="#7fae6b" /><circle cx="10.500" cy="10.500" r="3.500" fill="#f2f2f2" stroke="#888" /><path d="M13 13l3 3" stroke="#777" strokeWidth="1.500" /></Icon>
      </button>
      <Caret className="mt-[10px] text-[#888]" />
      <button type="button" aria-label="Customize navigation bar" className="mt-auto mr-px mb-px self-end">
        <Icon size={8}><circle cx="8" cy="8" r="7" stroke="#aaa" strokeWidth="2" fill="#eee" /><path d="M4 6.500h8M4 9.500h8" stroke="#999" strokeWidth="1.500" /></Icon>
      </button>
    </div>
  );
}

const viewControls: IconName[] = [
  "detail", "cube", "sun", "shadow", "teapot", "crop", "cropShow", "lockView",
  "glasses", "bulb", "tempProps", "analytical", "displace", "constraints",
];

function Canvas() {
  return (
    <main className="flex min-w-0 flex-1 flex-col border-t-2 border-l-2 border-[#6a6a6a] bg-white">
      <div className="relative flex-1 border-r border-[#ccc]">
        <div className="absolute top-[7px] right-[5px] flex items-center gap-[5px]">
          <button type="button" aria-label="Minimize view" className="mt-[4px] h-[5px] w-[12px] border border-[#555] bg-white" />
          <button type="button" aria-label="Restore view"><Icon size={12}><path d="M5 1h10v11H5zM1 4h10v11H1z" fill="#fff" strokeWidth="1.500" /><path d="M5 8h2v3H5z" strokeWidth="1.500" /></Icon></button>
          <button type="button" aria-label="Close view"><Icon size={12}><path d="M3 3l10 10M13 3L3 13" strokeWidth="6" /><path d="M3 3l10 10M13 3L3 13" stroke="#fff" strokeWidth="3" /></Icon></button>
        </div>
        <ViewCube />
        <NavigationBar />
      </div>
      <div className="flex h-[20px] items-center bg-[#f0f0f0] pb-[3px] text-black">
        <button type="button" className="w-[76px] pl-[24px] text-left">1 : 100</button>
        <div className="flex w-[294px]">
          {viewControls.map((name) => (
            <button key={name} type="button" aria-label={name} className="flex w-[21px] justify-center"><Glyph name={name} /></button>
          ))}
        </div>
        <div className="flex h-full flex-1 items-center bg-[#ececec] pr-[8px] pl-[7px]">
          <svg width="4" height="7" viewBox="0 0 4 7" aria-hidden="true"><path d="M4 0v7L0 3.500z" fill="#333" /></svg>
          <div className="flex flex-1 justify-end pr-[288px]"><span className="h-[15px] w-[15px] border border-[#999] bg-linear-to-b from-[#f4f4f4] to-[#d0d0d0]" /></div>
          <svg width="4" height="7" viewBox="0 0 4 7" aria-hidden="true"><path d="M0 0v7l4-3.500z" fill="#333" /></svg>
        </div>
      </div>
    </main>
  );
}

const selectToggles: IconName[] = ["link", "underlay", "pinned", "face", "drag", "gear"];

function StatusBar() {
  return (
    <footer className="h-[20px] shrink-0 overflow-hidden border-t border-[#777] bg-linear-to-b from-[#dedede] to-[#bcbcbc]">
      <div className="flex h-[24px] items-center">
        <p className="w-[395px] pb-[2px] whitespace-nowrap">Click to select, TAB for alternates, CTRL adds, SHIFT unselects.</p>
        <button type="button" aria-label="Worksets" className="flex h-[22px] w-[26px] items-center justify-center bg-[#cfcfcf]"><Glyph name="worksets" /></button>
        <div className="relative ml-[2px] w-[205px]">
          <select aria-label="Active workset" className="block h-[22px] w-full appearance-none border border-[#ddd] bg-white" />
          <BigCaret className="absolute top-[14px] right-[4px] text-[#aaa]" />
        </div>
        <button type="button" aria-label="Editing requests" className="ml-[4px] flex h-[22px] w-[52px] items-center gap-[4px] bg-[#d6d6d6] pl-[4px]"><Glyph name="request" />:0</button>
        <button type="button" aria-label="Design options" className="ml-[2px] flex h-[22px] w-[24px] items-center justify-center bg-[#cfcfcf]"><Glyph name="optList" /></button>
        <button type="button" aria-label="Active only" className="ml-[2px] flex h-[22px] w-[24px] items-center justify-center bg-[#cfcfcf]"><Glyph name="optMove" /></button>
        <div className="relative ml-[3px] w-[156px]">
          <select aria-label="Design option" className="block h-[22px] w-full appearance-none border border-[#ccc] bg-[#fafafa] pb-[2px] pl-[3px] text-[11px] text-[#888]">
            <option>Main Model</option>
          </select>
          <BigCaret className="absolute top-[14px] right-[4px] text-[#aaa]" />
        </div>
        <div className="ml-auto flex items-center gap-[2px] pr-[50px]">
          {selectToggles.map((name) => (
            <button key={name} type="button" aria-label={name} className="flex h-[22px] w-[24px] items-center justify-center bg-[#cfcfcf]"><Glyph name={name} /></button>
          ))}
          <button type="button" aria-label="Filter" className="flex items-center pl-px"><Glyph name="filter" /><span className="pt-[2px]">:0</span></button>
        </div>
      </div>
    </footer>
  );
}

export default function App() {
  return (
    <div className="h-screen overflow-hidden bg-white pt-[8px] pl-[9px] font-['Open_Sans',sans-serif] text-[11px] leading-[15px] text-black">
      <div className="relative flex h-full flex-col border-l border-[#777] bg-[#e1e3e5]">
        <TitleBar />
        <TabRow />
        <button
          type="button"
          aria-label="Application menu"
          className="absolute top-0 -left-px flex h-[41px] w-[40px] items-center justify-center gap-[3px] border border-[#222] bg-linear-to-b from-[#bcbcbc] to-[#8b8b8b]"
        >
          <svg width="21" height="26" viewBox="0 0 21 26" aria-hidden="true">
            <defs>
              <linearGradient id="brand" x1="0" y1="0" x2="1" y2="1">
                <stop offset="0" stopColor="#1c62ae" />
                <stop offset=".5" stopColor="#2c86d2" />
                <stop offset="1" stopColor="#6fc0e0" />
              </linearGradient>
            </defs>
            <path fillRule="evenodd" d="M0 0h11c6 0 9 3 9 7.500 0 3.500-2 6-4.500 7L21 25h-7l-5-9H7v5l-7 5zM7 5v6h3c4 0 4-6 0-6z" fill="url(#brand)" />
            <path d="M0 0l7 5v16l-7 5z" fill="#185693" fillOpacity=".75" />
          </svg>
          <BigCaret />
        </button>
        <Ribbon />
        <div className="mt-[27px] flex min-h-0 flex-1">
          <aside className="flex w-[360px] shrink-0 flex-col bg-[#f0f0f0] pr-[4px]">
            <Properties />
            <ProjectBrowser />
          </aside>
          <Canvas />
        </div>
        <StatusBar />
      </div>
    </div>
  );
}
